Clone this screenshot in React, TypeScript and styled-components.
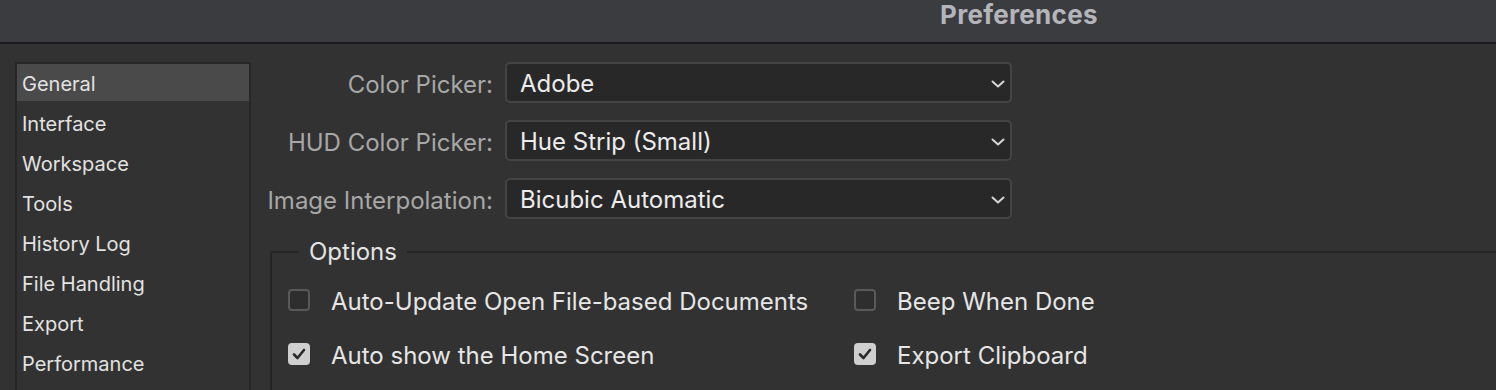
import React from 'react'
import styled, { createGlobalStyle } from 'styled-components'

const GlobalStyle = createGlobalStyle`
  html, body {
    margin: 0;
    padding: 0;
    background: #323232;
    overflow: hidden;
  }
  body {
    font-family: Inter, "Noto Sans", "Liberation Sans", sans-serif;
  }
`

const Window = styled.div`
  width: 1496px;
  height: 390px;
  display: flex;
  flex-direction: column;
  background: #323232;
  overflow: hidden;
`

const TitleBar = styled.header`
  height: 44px;
  flex-shrink: 0;
  box-sizing: border-box;
  display: flex;
  align-items: flex-start;
  padding: 1px 0 0 940px;
  background: #3b3c40;
  border-bottom: 2px solid #1b1b1c;
`

const Title = styled.h1`
  margin: 0;
  font-size: 26px;
  line-height: 28px;
  font-weight: 700;
  color: #b4b5ba;
  letter-spacing: 0.3px;
`

const Body = styled.div`
  flex: 1;
  display: flex;
  padding: 18px 0 0 15px;
  min-height: 0;
`

const Sidebar = styled.nav`
  width: 236px;
  flex-shrink: 0;
  box-sizing: border-box;
  border: 2px solid #272727;
  border-bottom: none;
  display: flex;
  flex-direction: column;
  gap: 3px;
`

const NavItem = styled.div<{ $active?: boolean }>`
  height: 37px;
  display: flex;
  align-items: center;
  padding: 2px 0 0 5px;
  box-sizing: border-box;
  font-size: 20px;
  color: #e2e2e2;
  background: ${p => (p.$active ? '#4a4a4a' : 'transparent')};
`

const Main = styled.main`
  flex: 1;
  padding-left: 16px;
  display: flex;
  flex-direction: column;
  min-width: 0;
`

const Form = styled.div`
  display: grid;
  grid-template-columns: 226px 507px;
  grid-auto-rows: 41px;
  column-gap: 12px;
  row-gap: 17px;
  align-items: center;
`

const Label = styled.label`
  text-align: right;
  padding-top: 3px;
  font-size: 24px;
  color: #a7a7a7;
  white-space: nowrap;
`

const Select = styled.div`
  height: 41px;
  box-sizing: border-box;
  display: flex;
  align-items: center;
  justify-content: space-between;
  padding: 2px 5px 0 13px;
  background: #282828;
  border: 2px solid #444444;
  border-radius: 5px;
  font-size: 24px;
  color: #ececec;
`

const Group = styled.fieldset`
  margin: 20px -40px 0 3px;
  padding: 24px 0 40px 16px;
  border: 2px solid #252525;
  border-radius: 2px;
  min-width: 0;
`

const Legend = styled.legend`
  margin-left: 11px;
  padding: 0 10px;
  font-size: 24px;
  line-height: 26px;
  color: #e4e4e4;
`

const Options = styled.div`
  display: grid;
  grid-template-columns: 566px auto;
  row-gap: 32px;
`

const Option = styled.div`
  display: flex;
  align-items: center;
  gap: 21px;
  font-size: 24px;
  color: #e6e6e6;
  height: 22px;
`

const OptionText = styled.span`
  padding-top: 3px;
`

const Box = styled.span<{ $checked?: boolean }>`
  width: 22px;
  height: 22px;
  box-sizing: border-box;
  border-radius: 4px;
  flex-shrink: 0;
  display: flex;
  align-items: center;
  justify-content: center;
  background: ${p => (p.$checked ? '#cfcfcf' : '#2e2e2e')};
  border: 2px solid ${p => (p.$checked ? '#cfcfcf' : '#595959')};
`

const Chevron = () => (
  <svg width="14" height="8" viewBox="0 0 14 8" fill="none">
    <path d="M1.5 1.5 L7 6.5 L12.5 1.5" stroke="#d6d6d6" strokeWidth="2" strokeLinecap="round" strokeLinejoin="round" />
  </svg>
)

const Check = () => (
  <svg width="14" height="12" viewBox="0 0 14 12" fill="none">
    <path d="M2 6.5 L5.5 10 L12 2" stroke="#2a2a2a" strokeWidth="2.6" strokeLinecap="round" strokeLinejoin="round" />
  </svg>
)

const navItems = ['General', 'Interface', 'Workspace', 'Tools', 'History Log', 'File Handling', 'Export', 'Performance']

const fields = [
  { label: 'Color Picker:', value: 'Adobe' },
  { label: 'HUD Color Picker:', value: 'Hue Strip (Small)' },
  { label: 'Image Interpolation:', value: 'Bicubic Automatic' },
]

const options = [
  { text: 'Auto-Update Open File-based Documents', checked: false },
  { text: 'Beep When Done', checked: false },
  { text: 'Auto show the Home Screen', checked: true },
  { text: 'Export Clipboard', checked: true },
]

const App = () => {
  return (
    <Window>
      <GlobalStyle />
      <TitleBar>
        <Title>Preferences</Title>
      </TitleBar>
      <Body>
        <Sidebar>
          {navItems.map((item, i) => (
            <NavItem key={item} $active={i === 0}>{item}</NavItem>
          ))}
        </Sidebar>
        <Main>
          <Form>
            {fields.map(f => (
              <React.Fragment key={f.label}>
                <Label>{f.label}</Label>
                <Select>
                  <span>{f.value}</span>
                  <Chevron />
                </Select>
              </React.Fragment>
            ))}
          </Form>
          <Group>
            <Legend>Options</Legend>
            <Options>
              {options.map(o => (
                <Option key={o.text}>
                  <Box $checked={o.checked}>{o.checked && <Check />}</Box>
                  <OptionText>{o.text}</OptionText>
                </Option>
              ))}
            </Options>
          </Group>
        </Main>
      </Body>
    </Window>
  )
}

export default App
